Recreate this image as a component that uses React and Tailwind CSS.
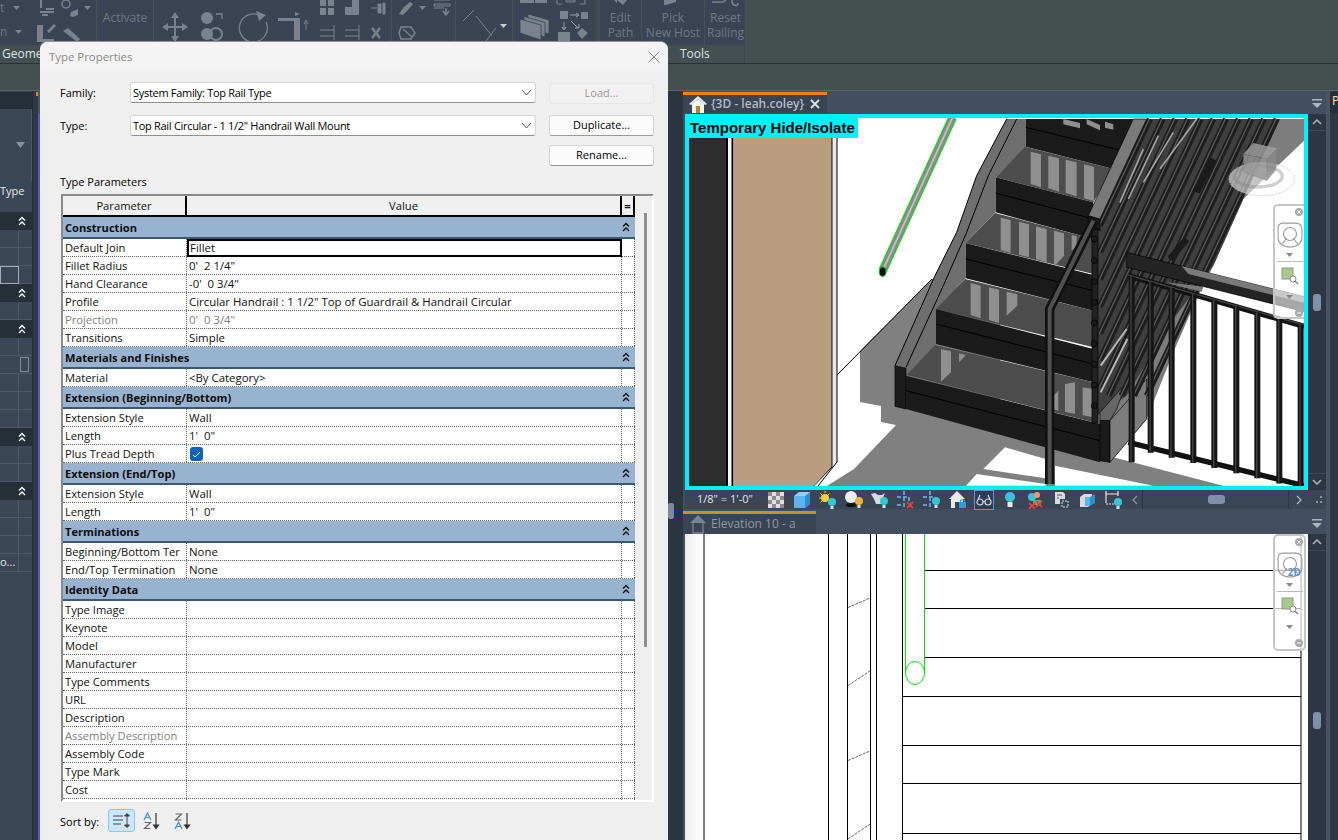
import React from "react";

const F = "font-['Open_Sans',sans-serif]";

const sections = [
  { title: "Construction", rows: [["Default Join", "Fillet", "sel"], ["Fillet Radius", "0'  2 1/4\""], ["Hand Clearance", "-0'  0 3/4\""], ["Profile", "Circular Handrail : 1 1/2\" Top of Guardrail & Handrail Circular"], ["Projection", "0'  0 3/4\"", "dim"], ["Transitions", "Simple"]] },
  { title: "Materials and Finishes", rows: [["Material", "<By Category>"]] },
  { title: "Extension (Beginning/Bottom)", rows: [["Extension Style", "Wall"], ["Length", "1'  0\""], ["Plus Tread Depth", "", "check"]] },
  { title: "Extension (End/Top)", rows: [["Extension Style", "Wall"], ["Length", "1'  0\""]] },
  { title: "Terminations", rows: [["Beginning/Bottom Ter", "None"], ["End/Top Termination", "None"]] },
  { title: "Identity Data", rows: [["Type Image", ""], ["Keynote", ""], ["Model", ""], ["Manufacturer", ""], ["Type Comments", ""], ["URL", ""], ["Description", ""], ["Assembly Description", "", "dimname"], ["Assembly Code", ""], ["Type Mark", ""], ["Cost", ""], ["", ""]] },
];

function DoubleUp({ color = "#111" }) {
  return (
    <svg width="8" height="10" viewBox="0 0 8 10" fill="none" stroke={color} strokeWidth="1.4">
      <path d="M1 4.5 4 1.5 7 4.5M1 9 4 6 7 9" />
    </svg>
  );
}

function Chevron() {
  return (
    <svg width="11" height="7" viewBox="0 0 11 7" fill="none" stroke="#555" strokeWidth="1">
      <path d="M1 1 5.5 6 10 1" />
    </svg>
  );
}

function Select({ text }) {
  return (
    <div className="w-[406px] h-[21px] bg-white border border-[#d4d4d4] border-b-[#8f8f8f] rounded-[3px] flex items-center justify-between pl-[2px] pr-[3px] text-[11px] tracking-[-0.3px] text-black">
      <span className="pt-[1px]">{text}</span>
      <Chevron />
    </div>
  );
}

function Btn({ children, dim }) {
  return (
    <div className={dim
      ? "w-[105px] h-[21px] bg-[#f1f1f1] border border-[#e6e6e6] rounded-[3px] flex items-center justify-center text-[11px] text-[#9a9a9a]"
      : "w-[105px] h-[21px] bg-[#fbfbfb] border border-[#d4d4d4] border-b-[#9a9a9a] rounded-[3px] flex items-center justify-center text-[11px] text-black"}>
      {children}
    </div>
  );
}

function Row({ row }) {
  const [name, value, kind] = row;
  return (
    <div className="flex h-[18px] bg-white text-[#111] border-b border-dotted border-[#666]">
      <div className={kind === "dim" || kind === "dimname"
        ? "w-[124px] shrink-0 pl-[2px] overflow-hidden whitespace-nowrap border-r border-dotted border-[#666] text-[#808080] text-[11.2px] leading-[17px]"
        : "w-[124px] shrink-0 pl-[2px] overflow-hidden whitespace-nowrap border-r border-dotted border-[#666] text-[11.2px] leading-[17px]"}>
        {name}
      </div>
      {kind === "sel" ? (
        <div className="w-[435px] shrink-0 h-[18px] border-2 border-black pl-[1px] text-[11.4px] leading-[14px] bg-white">{value}</div>
      ) : (
        <div className={kind === "dim"
          ? "w-[435px] shrink-0 pl-[2px] whitespace-pre border-r border-dotted border-[#666] text-[#808080] text-[11.4px] leading-[17px]"
          : "w-[435px] shrink-0 pl-[2px] whitespace-pre border-r border-dotted border-[#666] text-[11.4px] leading-[17px]"}>
          {kind === "check" ? (
            <div className="w-[13px] h-[14px] mt-[2px] ml-[1px] rounded-[3px] bg-[#0a62bd] flex items-center justify-center">
              <svg width="9" height="7" viewBox="0 0 9 7" fill="none" stroke="#fff" strokeWidth="1"><path d="M1 4 3.2 6 8 1" /></svg>
            </div>
          ) : value}
        </div>
      )}
      <div className="w-[13px] shrink-0 border-r border-dotted border-[#666]" />
    </div>
  );
}

function Table() {
  return (
    <div className="ml-[1px] w-[593px] h-[608px] border-t-2 border-l-2 border-t-[#8a8a8a] border-l-[#8a8a8a] border-r-2 border-b-2 border-r-white border-b-white flex overflow-hidden">
      <div className="w-[572px] shrink-0">
        <div className="flex h-[21px] bg-[#f0f0f0] border-b-2 border-black text-[11.2px] text-[#111] leading-[19px] text-center">
          <div className="w-[124px] border-r-2 border-black">Parameter</div>
          <div className="w-[435px] border-r-2 border-black">Value</div>
          <div className="w-[13px] border-r-2 border-black font-bold">=</div>
        </div>
        {sections.map((s) => (
          <div key={s.title}>
            <div className="flex items-center justify-between h-[22px] bg-[#98b3d0] border-b-2 border-[#3d5673] pl-[2px] pr-[5px] text-[11.1px] font-bold text-[#0c0c0c]">
              <span className="pt-[3px]">{s.title}</span>
              <DoubleUp />
            </div>
            {s.rows.map((r, i) => <Row key={i} row={r} />)}
          </div>
        ))}
      </div>
      <div className="flex-1 bg-[#f0f0f0] relative">
        <div className="ml-[9px] mt-[17px] w-[3px] h-[434px] bg-[#8f8f8f]" />
      </div>
    </div>
  );
}

function SortIcon({ children, active }) {
  return (
    <div className={active
      ? "w-[27px] h-[23px] rounded-[3px] bg-[#cce6fb] border border-[#8cc6f2] flex items-center justify-center"
      : "w-[27px] h-[23px] flex items-center justify-center"}>
      {children}
    </div>
  );
}

function Dialog() {
  return (
    <div className={`absolute left-[40px] top-[41px] w-[628px] h-[799px] bg-[#efefef] rounded-t-[8px] border-t border-[#8e9297] ${F}`}>
      <div className="h-[29px] bg-[#f3f3f3] rounded-t-[8px] flex items-center justify-between pl-[9px] pr-[8px]">
        <span className="text-[11.4px] text-[#8a8a8a]">Type Properties</span>
        <svg width="12" height="12" viewBox="0 0 12 12" stroke="#8a8a8a" strokeWidth="1"><path d="M.5.5 11.500 11.500M11.500.5.5 11.500" /></svg>
      </div>
      <div className="pl-[20px] pt-[11px]">
        <div className="flex items-center h-[21px]">
          <span className="w-[70px] pt-[1px] text-[11px] text-black">Family:</span>
          <Select text="System Family: Top Rail Type" />
          <div className="ml-[13px] mt-[1px]"><Btn dim>Load...</Btn></div>
        </div>
        <div className="flex items-center h-[21px] mt-[12px]">
          <span className="w-[70px] pt-[1px] text-[11px] text-black">Type:</span>
          <Select text={'Top Rail Circular - 1 1/2" Handrail Wall Mount'} />
          <div className="ml-[13px] -mt-[1px]"><Btn>Duplicate...</Btn></div>
        </div>
        <div className="flex justify-end h-[21px] mt-[9px] pr-[14px]"><Btn>Rename...</Btn></div>
        <div className="h-[21px] mt-[6px] text-[11px] text-black leading-[20px]">Type Parameters</div>
        <div className="mt-[1px]"><Table /></div>
        <div className="flex items-center mt-[7px] h-[23px]">
          <span className="w-[48px] mt-[3px] text-[11px] text-black">Sort by:</span>
          <SortIcon active>
            <svg width="20" height="17" viewBox="0 0 20 17" fill="none" stroke="#444" strokeWidth="1">
              <path d="M1 4h10M1 8h10M1 12h8M15 2v13" />
              <path d="M12.500 4 15 1.500 17.500 4ZM12.500 13 15 15.500 17.500 13Z" fill="#444" />
            </svg>
          </SortIcon>
          <div className="w-[3px]" />
          <SortIcon>
            <svg width="18" height="18" viewBox="0 0 18 18" fill="none" strokeWidth="1.200">
              <path d="M1 8 4.500 1 8 8M2.300 5.500h4.400" stroke="#3b8ee6" />
              <path d="M1.500 10.500h6L1.500 16.500h6" stroke="#666" />
              <path d="M13 1v14" stroke="#333" />
              <path d="M10.500 13 13 16.500 15.500 13Z" fill="#333" stroke="#333" />
            </svg>
          </SortIcon>
          <div className="w-[4px]" />
          <SortIcon>
            <svg width="18" height="18" viewBox="0 0 18 18" fill="none" strokeWidth="1.200">
              <path d="M1.500 2h6L1.500 8h6" stroke="#666" />
              <path d="M1 17 4.500 10 8 17M2.300 14.500h4.400" stroke="#3b8ee6" />
              <path d="M13 1v14" stroke="#333" />
              <path d="M10.500 13 13 16.500 15.500 13Z" fill="#333" stroke="#333" />
            </svg>
          </SortIcon>
        </div>
      </div>
    </div>
  );
}

function RibbonPanel({ className, children }) {
  return <div className={`shrink-0 h-[45px] border-r border-[#4a5258] relative overflow-hidden ${className}`}>{children}</div>;
}

function Ribbon() {
  const ic = "#7b828d";
  return (
    <div className={`h-[64px] flex bg-[#445050] border-b border-[#2a3238] ${F}`}>
      <div className="w-[745px] shrink-0 bg-[#434f50] border-r border-[#3c4850]">
        <div className="flex h-[45px] bg-[#3b4454] text-[12px] text-[#6f7886] leading-[15px] text-center">
          <RibbonPanel className="w-[97px]">
            <svg width="97" height="45" viewBox="0 0 97 45" fill={ic}>
              <path d="M13 6h7l-3.500 4ZM15 30h7l-3.500 4ZM84 6h7l-3.500 4Z" />
              <rect x="40" y="0" width="2" height="8" /><rect x="46" y="8" width="8" height="2" /><rect x="40" y="11" width="14" height="2" /><rect x="42" y="14" width="6" height="2" />
              <circle cx="66" cy="4" r="4" fill="none" stroke={ic} strokeWidth="1.500" /><path d="M71 12l7-3 0 6-5 2-3-1Z" />
              <path d="M37 25h6v14h11v3H37ZM47 31l7-7 2 2-7 7Z" />
              <path d="M63 31l5-3 12 11-3 3-10-8Z" />
            </svg>
            <span className="absolute left-0 top-[0px] text-[12px]">t</span>
            <span className="absolute left-0 top-[24px] text-[12px]">n</span>
          </RibbonPanel>
          <RibbonPanel className="w-[57px]"><div className="pt-[10px]">Activate</div></RibbonPanel>
          <RibbonPanel className="w-[238px]">
            <svg width="238" height="45" viewBox="154 0 238 45" fill={ic}>
              <path d="M175 12l4 6h-8ZM175 42l4-6h-8ZM162 27l6-4v8ZM188 27l-6-4v8Z" /><path d="M174 17h2v20h-2ZM165 26h20v2h-20Z" />
              <circle cx="207" cy="18" r="6" /><circle cx="207" cy="34" r="6" /><circle cx="216" cy="34" r="6" fill="none" stroke={ic} strokeWidth="2" />
              <path d="M216 14h6v5" fill="none" stroke={ic} strokeWidth="1.300" />
              <path d="M262 17a14 14 0 1 0 4 5" fill="none" stroke={ic} strokeWidth="1.300" /><path d="M256 11l10 4-7 6Z" />
              <path d="M278 18h16v3h-16ZM294 18h6v22h-6ZM283 14h16M295 12l5 2-5 2" /><path d="M306 30v-8M304 24l2-4 2 4" fill="none" stroke={ic} />
              <rect x="320" y="0" width="6" height="6" /><rect x="328" y="0" width="6" height="6" /><rect x="320" y="8" width="6" height="7" /><rect x="328" y="8" width="6" height="7" />
              <rect x="345" y="0" width="14" height="15" /><rect x="345" y="0" width="7" height="7" fill="#3b4454" />
              <path d="M371 8h6M378 4h3v9h-3ZM383 3h2v11h-2Z" stroke={ic} />
              <path d="M320 30h14M320 36h14M334 25v15" stroke={ic} fill="none" /><path d="M345 30h14M345 36h14M359 25v15" stroke={ic} fill="none" />
              <path d="M372 28l8 10M380 28l-8 10" stroke={ic} strokeWidth="2.500" />
            </svg>
          </RibbonPanel>
          <RibbonPanel className="w-[64px]">
            <svg width="64" height="45" viewBox="392 0 64 45" fill={ic}>
              <path d="M399 14l5-7 6-5 3 2-5 6-5 5Z" /><path d="M419 6h7l-3.500 4Z" />
              <path d="M434 0h16M434 4h16v2h-16ZM434 8h10" stroke={ic} fill="none" /><path d="M446 8v6M443 11l3 4 3-4" fill="none" stroke={ic} strokeWidth="1.500" />
              <path d="M401 27l10 0 4 6-4 6-10 0-2-6Z M403 29l9 8" fill="none" stroke={ic} strokeWidth="1.500" />
            </svg>
          </RibbonPanel>
          <RibbonPanel className="w-[57px]">
            <svg width="57" height="45" viewBox="456 0 57 45" fill="none" stroke={ic}>
              <path d="M463 21l11-11M476 16l16 20" />
              <path d="M486 41l10-13" />
              <path d="M500 24h7l-3.500 4Z" fill="#c8ccd0" stroke="none" />
            </svg>
          </RibbonPanel>
          <RibbonPanel className="w-[83px] border-r-0">
            <svg width="83" height="45" viewBox="513 0 83 45" fill={ic} stroke="#3b4454" strokeWidth=".8">
              <path d="M528 14 549 20V34L528 27Z" />
              <path d="M524 16.500 545 22.500V37L524 30Z" />
              <path d="M520 19 541 25V40L520 33Z" />
              <rect x="520" y="0" width="14" height="3" stroke="none" /><rect x="535" y="0" width="12" height="3" stroke="none" />
              <path d="M557 0v4h5M585 0v4h-5M566 0h9v2h-9Z" fill="none" stroke={ic} strokeWidth="1" />
              <rect x="560" y="11" width="8" height="8" stroke="none" /><rect x="581" y="12" width="7" height="7" stroke="none" />
              <path d="M570 15h8M576 13l3 2-3 2M564 22v7M562 27l2 3 2-3M571 21l7 7M575 28h4v-4" stroke="#9aa0a8" strokeWidth="1" fill="none" />
              <rect x="558" y="32" width="12" height="13" stroke="none" /><path d="M582 28l6 5-6 6-5-6Z" stroke="none" />
            </svg>
          </RibbonPanel>
          <div className="w-[4px] shrink-0 bg-[#424e4e]" />
          <RibbonPanel className="w-[42px]">
            <svg className="absolute left-[14px] top-0" width="14" height="6" viewBox="0 0 14 6" fill={ic}><path d="M3 0l6 5 4-5ZM0 0h3v3Z" /></svg>
            <div className="pt-[10px]">Edit<br />Path</div>
          </RibbonPanel>
          <RibbonPanel className="w-[63px]">
            <svg className="absolute left-[22px] top-0" width="12" height="5" viewBox="0 0 12 5" fill={ic}><path d="M0 0h12v2l-10 3H0Z" /></svg>
            <div className="pt-[10px]">Pick<br />New Host</div>
          </RibbonPanel>
          <div className="shrink-0 w-[41px] h-[45px] relative">
            <svg className="absolute left-[7px] top-0" width="28" height="8" viewBox="0 0 28 8" fill="none" stroke={ic} strokeWidth="1.500"><path d="M0 2h11l3-2M20 0v2c1 4 6 5 6 1" /></svg>
            <div className="pt-[10px]">Reset<br />Railing</div>
          </div>
        </div>
        <div className="flex h-[18px] text-[12px] text-[#dfe3e6] leading-[18px]">
          <span className="pl-[2px] w-[678px]">Geome</span>
          <span className="pl-[2px]">Tools</span>
        </div>
      </div>
    </div>
  );
}

function LeftRow({ section, children }) {
  return section ? (
    <div className="h-[18px] bg-[#262e38] flex justify-end items-center pr-[6px]"><DoubleUp color="#fff" /></div>
  ) : (
    <div className="h-[18px] flex border-b border-[#4d5868]">
      <div className="w-[19px] border-r border-[#4d5868] text-[11px] text-[#e4e7ea] leading-[15px] whitespace-nowrap">{children}</div>
      <div className="flex-1" />
    </div>
  );
}

function LeftPanel() {
  const pat = ["s", "r", "r", "box", "s", "r", "s", "r", "chk", "r", "r", "r", "s", "r", "r", "s", "r", "r", "r", "o"];
  return (
    <div className={`w-[33px] shrink-0 bg-[#3b4757] border-r border-[#262e38] ${F}`}>
      <div className="h-[17px] bg-[#262e38] mt-[1px]" />
      <div className="h-[72px] border-r border-[#4d5868] flex justify-end items-center pr-[6px]">
        <svg width="9" height="6" viewBox="0 0 9 6" fill="#8793a3"><path d="M0 0h9L4.500 6Z" /></svg>
      </div>
      <div className="h-[22px] text-[11px] text-[#e4e7ea] leading-[20px]">Type</div>
      <div className="h-[9px]" />
      {pat.map((p, i) => {
        if (p === "s") return <LeftRow key={i} section />;
        if (p === "box") return (
          <div key={i} className="h-[18px] flex border-b border-[#4d5868]">
            <div className="w-[19px] h-[18px] border border-[#a4acb6]" />
          </div>
        );
        if (p === "chk") return (
          <div key={i} className="h-[18px] flex justify-end border-b border-[#4d5868] pr-[3px]">
            <div className="w-[9px] h-[15px] mt-[1px] border border-[#7e8a99]" />
          </div>
        );
        return <LeftRow key={i}>{p === "o" ? "o..." : null}</LeftRow>;
      })}
    </div>
  );
}

function HouseIcon({ dim }) {
  return dim ? (
    <svg width="20" height="19" viewBox="0 0 20 19" fill="none">
      <path d="M10 0 18 8H2Z" fill="#7b8490" />
      <path d="M5 8v10h10V8" stroke="#7b8490" strokeWidth="1.300" />
    </svg>
  ) : (
    <svg width="18" height="17" viewBox="0 0 18 17">
      <path d="M9 0 18 8 16 9 9 3 2 9 0 8Z" fill="#e8e8e8" />
      <path d="M3 8 9 3l6 5v9H3Z" fill="#f4f4f4" />
      <rect x="7" y="10" width="4" height="7" fill="#c97a2a" />
    </svg>
  );
}

function MenuIcon() {
  return (
    <svg width="10" height="9" viewBox="0 0 10 9" fill="#aeb6c2"><rect width="10" height="1.500" /><path d="M0 4h10L5 9Z" /></svg>
  );
}

function Bulb({ x = 0, y = 0, c = "#37c6d6" }) {
  return (
    <g transform={`translate(${x} ${y})`}>
      <circle cx="4" cy="4" r="4" fill={c} />
      <rect x="2.500" y="8" width="3" height="3" fill="#ddd" />
    </g>
  );
}

function RedX({ x, y }) {
  return <path transform={`translate(${x} ${y})`} d="M0 0 6 6M6 0 0 6" stroke="#e8403a" strokeWidth="1.800" />;
}

function StatusIcons() {
  const box = "w-[26px] h-[20px] flex items-center justify-center shrink-0";
  return (
    <>
      <div className={box}>
        <svg width="16" height="16" viewBox="0 0 16 16">
          <rect width="16" height="16" fill="#e0e0e0" />
          <path d="M0 0h4v4H0ZM8 0h4v4H8ZM4 4h4v4H4ZM12 4h4v4h-4ZM0 8h4v4H0ZM8 8h4v4H8ZM4 12h4v4H4ZM12 12h4v4h-4Z" fill="#8a8a8a" />
        </svg>
      </div>
      <div className={box}>
        <svg width="16" height="18" viewBox="0 0 16 18">
          <path d="M0 5 5 1h11v12l-5 4H0Z" fill="#8fd0f5" /><path d="M0 5h11v12H0Z" fill="#5bb5ec" /><path d="M11 5l5-4v12l-5 4Z" fill="#2e8fd0" />
        </svg>
      </div>
      <div className={box}>
        <svg width="18" height="18" viewBox="0 0 18 18">
          <circle cx="6" cy="7" r="4" fill="#f5d03a" />
          <path d="M6 0v2M0 7h2M1.500 2.500 3 4M10.500 2.500 9 4M1.500 11.500 3 10" stroke="#f5d03a" />
          <Bulb x={9} y={7} />
        </svg>
      </div>
      <div className={box}>
        <svg width="18" height="20" viewBox="0 0 18 20">
          <circle cx="6" cy="7" r="6" fill="#eceff2" /><ellipse cx="6" cy="15" rx="5" ry="2" fill="#111" />
          <Bulb x={10} y={7} c="#f0b040" />
        </svg>
      </div>
      <div className={box}>
        <svg width="18" height="18" viewBox="0 0 18 18">
          <path d="M0 3 4 2 7 4h4l3-2-2 5-1 6H5L3 8Z" fill="#d6dade" />
          <Bulb x={9} y={6} />
        </svg>
      </div>
      <div className={box}>
        <svg width="18" height="18" viewBox="0 0 18 18" fill="none">
          <path d="M7 0v16M0 6h12M12 6v5M0 14h5" stroke="#6db5ea" strokeWidth="1.500" strokeDasharray="4 2" />
          <RedX x={10} y={11} />
        </svg>
      </div>
      <div className={box}>
        <svg width="18" height="18" viewBox="0 0 18 18" fill="none">
          <path d="M7 0v16M0 6h12M0 14h5" stroke="#6db5ea" strokeWidth="1.500" strokeDasharray="4 2" />
          <Bulb x={9} y={6} />
        </svg>
      </div>
      <div className={box}>
        <svg width="18" height="18" viewBox="0 0 18 18">
          <path d="M8 0 16 8H14V17H2V8H0Z" fill="#e8eaec" /><rect x="6" y="11" width="4" height="6" fill="#3b4555" />
          <rect x="10" y="11" width="7" height="6" fill="#2c9fd0" /><path d="M11.500 11V9h4v2" fill="none" stroke="#2c9fd0" />
        </svg>
      </div>
      <div className={box}>
        <div className="w-[20px] h-[20px] border border-[#5b9bd5] bg-[#2c3e55] flex items-center justify-center">
          <svg width="16" height="12" viewBox="0 0 16 12" fill="none" stroke="#d5dae0" strokeWidth="1.200">
            <circle cx="4" cy="8" r="3" /><circle cx="12" cy="8" r="3" /><path d="M7 7.500h2M2 6l2-5M14 6l-2-5" />
          </svg>
        </div>
      </div>
      <div className={box}>
        <svg width="12" height="18" viewBox="0 0 12 18"><circle cx="6" cy="6" r="5" fill="#37c6d6" /><rect x="3.500" y="11" width="5" height="5" fill="#e8e8e8" /></svg>
      </div>
      <div className={box}>
        <svg width="18" height="18" viewBox="0 0 18 18" fill="none">
          <circle cx="5" cy="6" r="4" fill="#37c6d6" /><circle cx="10" cy="4" r="3" fill="#e8a060" /><path d="M6 14v-5h8v5Z" fill="#5db070" />
          <RedX x={9} y={10} /><RedX x={2} y={12} />
        </svg>
      </div>
      <div className={box}>
        <svg width="16" height="18" viewBox="0 0 16 18" fill="none">
          <path d="M1 1h8l2 2v5H6v5H1Z" fill="#d8dbdf" />
          <path d="M3 4h5M3 7h2" stroke="#555" /><path d="M8 10h6v6H8Z" stroke="#d8dbdf" strokeDasharray="2 1" />
        </svg>
      </div>
      <div className={box}>
        <svg width="16" height="16" viewBox="0 0 16 16">
          <path d="M0 5 4 2h8v10l-4 3H0Z" fill="#d8dbdf" /><path d="M5 5h5v9H5Z" fill="#5bb5ec" /><path d="M10 5l5-3v9l-5 3Z" fill="#2e8fd0" />
        </svg>
      </div>
      <div className={box}>
        <svg width="18" height="20" viewBox="0 0 18 20" fill="none">
          <path d="M1 1v12M13 1v5M1 4h12" stroke="#e3e6ea" strokeWidth="1.200" /><path d="M1 14h8" stroke="#e3e6ea" strokeDasharray="2 1" />
          <Bulb x={9} y={8} />
        </svg>
      </div>
    </>
  );
}

function Scene() {
  const balusters = [755, 812, 875, 940, 1003, 1069, 1132, 1198, 1262];
  const bars = [0, 1, 2, 3, 4, 5, 6, 7, 8, 9, 10];
  const dots = [360, 425, 488, 550, 612, 674, 736, 798, 860];
  return (
    <svg className="block w-full h-full" viewBox="689 119 615 368" preserveAspectRatio="none">
      <rect x="689" y="119" width="615" height="368" fill="#fff" />
      <rect x="689" y="119" width="37" height="368" fill="#2d2d2d" />
      <rect x="726" y="119" width="2" height="368" fill="#000" />
      <rect x="728" y="119" width="3.500" height="368" fill="#f4f4f4" />
      <rect x="731.500" y="119" width="2" height="368" fill="#000" />
      <path d="M733.500 119H832V468L814 487H733.500Z" fill="#b89d80" />
      <path d="M832 119V468L814 487" fill="none" stroke="#000" strokeWidth="1" />
      <path d="M833 119h4V463L816 487h-2L833 468Z" fill="#e8e8e8" />
      <path d="M837 119V463L818 487" fill="none" stroke="#000" strokeWidth="1" />

      <path d="M860 352 932 280 1000 300 1000 430 1120 460 1224 487H827L854 470 896 426 881 423 881 407 860 403Z" fill="#808080" />
      <path d="M837 376 932 280" fill="none" stroke="#000" strokeWidth="1" />

      <g transform="translate(880 120) scale(.33333)">
        <path d="M375 985 497 1020 497 1078 310 1050ZM290 1065 497 1095 497 1100 258 1100ZM525 1040 820 1100 525 1100Z" fill="#fff" />
        {/* underside and wall */}
        <path d="M1040 0H1272V65L1090 240 1000 440 950 540 880 700 800 900 690 1030 636 1025 636 300 800 0Z" fill="#7d7d7d" />
        <path d="M800 0H1200L1090 240 1000 440 880 600 740 830 636 900 636 300Z" fill="#3f3f3f" />
        {/* outer stringer */}
        <path d="M380 0 290 170 230 340 165 470 45 740 78 748 80 770 168 675 168 570 257 478 257 372 347 280 347 175 437 83 437 0Z" fill="#6f6f6f" />
        <path d="M380 0 290 170 230 340 165 470 45 740M410 0 325 170 260 340 190 500 78 745" fill="none" stroke="#000" strokeWidth="3" />
        {/* steps */}
        <path d="M80 768 165 678 640 790 640 910Z" fill="#4d4d4d" />
        <path d="M168 570 255 480 640 575 640 685Z" fill="#4d4d4d" />
        <path d="M257 372 345 282 640 360 640 465Z" fill="#4d4d4d" />
        <path d="M347 175 435 83 700 150 640 250Z" fill="#4d4d4d" />
        <g fill="#8f8f8f">
          <path d="M452 98 483 106V205L452 195ZM505 110 537 118V218L505 208ZM557 122 590 130V232L557 222ZM612 136 642 144V246L612 238Z" />
          <path d="M362 296 392 303V402L362 393ZM417 308 447 316V415L417 407ZM468 322 500 330V430L468 420ZM522 335 552 343 552 410 525 440 522 433ZM575 348 590 352V380L575 395Z" />
          <path d="M272 492 302 500V598L272 588ZM327 505 357 512V612L327 603ZM380 518 412 526V560L380 590Z" />
          <path d="M183 690 213 697V760L183 788ZM237 703 258 708 237 730ZM555 795 585 790V885L555 878ZM608 805 638 810V895L608 888ZM520 830 535 815V875L520 870Z" />
        </g>
        <path d="M45 740 78 748V870L45 862Z" fill="#1c1c1c" stroke="#000" strokeWidth="2" />
        <path d="M78 770 660 915V1030L78 870Z" fill="#1b1b1b" />
        <path d="M78 815 660 965" stroke="#000" strokeWidth="3" fill="none" />
        <path d="M168 570 640 690V790L168 675Z" fill="#1b1b1b" />
        <path d="M168 615 640 735" stroke="#000" strokeWidth="3" fill="none" />
        <path d="M257 372 640 468V575L257 478Z" fill="#1b1b1b" />
        <path d="M257 420 640 515" stroke="#000" strokeWidth="3" fill="none" />
        <path d="M347 175 640 250V360L347 280Z" fill="#1b1b1b" />
        <path d="M347 222 640 300" stroke="#000" strokeWidth="3" fill="none" />
        <path d="M437 0H760L700 150 437 83Z" fill="#1b1b1b" />
        <path d="M437 25 715 92" stroke="#000" strokeWidth="3" fill="none" />
        <path d="M550 0 600 12V28L550 16ZM620 0 660 18V34L620 16ZM675 8 700 16V32L675 26Z" fill="#8f8f8f" />
        <path d="M660 880 740 790 710 870 690 905H660Z" fill="#666" stroke="#000" strokeWidth="2" />
        <path d="M660 905 690 905V1030L660 1025Z" fill="#1b1b1b" stroke="#000" strokeWidth="2" />
        <path d="M690 905 800 780 800 900 690 1030Z" fill="#7d7d7d" stroke="#000" strokeWidth="2" />
        {/* diagonal rails */}
        {bars.map((k) => {
          const tx = 810 + k * 38;
          const by = Math.min((tx - 660) * 2.13, 830);
          const bx = tx - by / 2.13;
          return (
            <g key={k}>
              <path d={`M${tx} 0 ${bx} ${by}`} stroke="#1e1e1e" strokeWidth="18" fill="none" />
              <path d={`M${tx - 2} 0 ${bx - 2} ${by}`} stroke="#5a5a5a" strokeWidth="4" fill="none" />
            </g>
          );
        })}
        <path d="M790 90 720 250M835 50 745 240M880 40 790 190M950 0 840 150" stroke="#b0b0b0" strokeWidth="5" fill="none" opacity=".9" />
        <path d="M740 630 662 740M742 660 662 820" stroke="#b8b8b8" strokeWidth="6" fill="none" />
        <path d="M1000 120 950 220M920 360 870 420" stroke="#1b1b1b" strokeWidth="20" fill="none" />
        {/* guard cap */}
        <path d="M625 290 760 0H800L660 300Z" fill="#7a7a7a" stroke="#000" strokeWidth="2" />
        <path d="M625 292 660 302V335L625 325Z" fill="#1b1b1b" stroke="#000" strokeWidth="2" />
        <path d="M636 330H654V912H636Z" fill="#222" stroke="#000" strokeWidth="2" />
        {dots.map((y) => <circle key={y} cx="643" cy={y} r="9" fill="#1a1a1a" stroke="#000" strokeWidth="2" />)}
        {/* handrail */}
        <path d="M509 1095V570L640 305" fill="none" stroke="#111" strokeWidth="28" strokeLinejoin="round" />
        <path d="M509 1095V570L640 305" fill="none" stroke="#505050" strokeWidth="12" strokeLinejoin="round" />
        {/* right railing */}
        <path d="M740 400 1272 533V578L740 445Z" fill="#242424" stroke="#000" strokeWidth="2" />
        <path d="M905 441 1272 533V551L925 465Z" fill="#7a7a7a" />
        <path d="M860 490 970 503 965 518 880 497Z" fill="#7a7a7a" />
        <path d="M745 470 1272 622" stroke="#111" strokeWidth="16" fill="none" />
        <path d="M745 468 1272 618" stroke="#444" strokeWidth="4" fill="none" />
        <path d="M745 970 1272 1100" stroke="#111" strokeWidth="16" fill="none" />
        {balusters.map((x) => (
          <g key={x}>
            <path d={`M${x} ${470 + (x - 745) * 0.285}V${x === 755 ? 1030 : 985 + (x - 745) * 0.24}`} stroke="#151515" strokeWidth="18" fill="none" />
            <path d={`M${x - 2} ${470 + (x - 745) * 0.285}V${x === 755 ? 1030 : 985 + (x - 745) * 0.24}`} stroke="#444" strokeWidth="4" fill="none" />
          </g>
        ))}
        {/* green pipe */}
        <path d="M218 -5 8 455" stroke="#00e000" strokeWidth="26" fill="none" />
        <path d="M218 -5 8 455" stroke="#8c8c8c" strokeWidth="20" fill="none" />
        <path d="M218 -5 8 455" stroke="#c4c4c4" strokeWidth="5" fill="none" />
        <ellipse cx="8" cy="458" rx="10" ry="14" fill="#0a0a0a" stroke="#00c800" strokeWidth="3" />
        {/* view cube */}
        <ellipse cx="1145" cy="180" rx="98" ry="50" fill="#fff" fillOpacity=".55" stroke="#bbb" strokeWidth="2" strokeDasharray="6 3" />
        <ellipse cx="1135" cy="172" rx="72" ry="32" fill="none" stroke="#888" strokeWidth="10" opacity=".4" />
        <g opacity=".8">
          <path d="M1090 105 1120 72 1192 88 1160 120Z" fill="#a0a0a0" />
          <path d="M1090 105 1160 120 1160 185 1092 160Z" fill="#999" stroke="#777" />
          <path d="M1160 120 1192 88 1186 155 1160 185Z" fill="#8a8a8a" stroke="#777" />
        </g>
      </g>
    </svg>
  );
}

function NavDot({ minus }) {
  return (
    <svg className="self-end mr-[1px]" width="8" height="8" viewBox="0 0 8 8">
      <circle cx="4" cy="4" r="4" fill="#a8a8a8" />
      <path d={minus ? "M2 4h4" : "M2.300 2.300 5.700 5.700M5.700 2.300 2.300 5.700"} stroke="#fff" strokeWidth="1" />
    </svg>
  );
}

function NavBar({ h, two }) {
  return (
    <div className={h
      ? "absolute right-[2px] top-[0px] w-[33px] h-[117px] bg-white/70 border-2 border-[#c6c6c6] rounded-[5px] flex flex-col items-center pt-[2px]"
      : "absolute right-0 top-[86px] w-[31px] h-[115px] bg-white/60 border-2 border-r-0 border-[#c6c6c6] rounded-l-[5px] flex flex-col items-center pt-[2px]"}>
      <NavDot />
      <svg className="mt-[6px]" width="26" height="26" viewBox="0 0 24 24" fill="none" stroke="#9a9a9a" strokeWidth="1">
        <path d="M5 1h12c4 0 6 2 6 6v8c0 4-4 8-11 8S1 19 1 15V5c0-2 2-4 4-4Z" />
        <circle cx="12" cy="11" r="6" />
        <path d="M5 20l4-5M19 20l-4-5" />
        {two ? <text x="10" y="22" fontSize="9" fontWeight="700" fill="#5f8fc5" stroke="none">2D</text> : null}
      </svg>
      <svg className="mt-[5px]" width="7" height="4" viewBox="0 0 7 4" fill="#888"><path d="M0 0h7L3.500 4Z" /></svg>
      <div className="w-[26px] h-px bg-[#bbb] mt-[4px] shrink-0" />
      <svg className="mt-[5px]" width="18" height="18" viewBox="0 0 18 18" fill="none">
        <rect x="1" y="1" width="11" height="11" fill="#a8c98e" stroke="#8a9a80" />
        <circle cx="12" cy="12" r="3" fill="#fff" stroke="#888" /><path d="M14 14l3 3" stroke="#888" strokeWidth="1.500" />
      </svg>
      <svg className="mt-[10px]" width="7" height="4" viewBox="0 0 7 4" fill="#888"><path d="M0 0h7L3.500 4Z" /></svg>
      <div className="self-end mt-[10px]"><NavDot minus /></div>
    </div>
  );
}

function Views() {
  return (
    <div className={`w-[643px] shrink-0 h-full bg-[#434e60] flex flex-col ${F}`}>
      {/* 3D tab */}
      <div className="h-[23px] flex justify-between shrink-0">
        <div className="w-[144px] h-[21px] mt-[1px] bg-[#3b4454] border-t-[3px] border-[#e08a10] flex items-center pl-[6px]">
          <HouseIcon />
          <span className="ml-[4px] text-[12px] font-semibold text-[#b4bbc6] whitespace-nowrap">{"{3D - leah.coley}"}</span>
          <svg className="ml-[6px]" width="10" height="10" viewBox="0 0 10 10" stroke="#dfe3e8" strokeWidth="1.800"><path d="M1 1 9 9M9 1 1 9" /></svg>
        </div>
        <div className="pr-[4px] pt-[8px]"><MenuIcon /></div>
      </div>
      {/* 3D view */}
      <div className="flex pl-[2px] h-[376px] shrink-0">
        <div className="w-[623px] h-[376px] border-4 border-[#00f0ff] relative shrink-0">
          <Scene />
          <div className="absolute left-0 top-0 w-[169px] h-[20px] bg-[#00f0ff] text-[15px] leading-[19px] font-semibold text-black pl-[1px] font-['Liberation_Sans',sans-serif] whitespace-nowrap">Temporary Hide/Isolate</div>
          <NavBar />
        </div>
        <div className="w-[18px] bg-[#2d3743] flex flex-col">
          <div className="h-[17px] border-b border-[#3d4856] flex items-center justify-center">
            <svg width="10" height="6" viewBox="0 0 10 6" fill="none" stroke="#aeb6c2" strokeWidth="1.500"><path d="M1 5 5 1 9 5" /></svg>
          </div>
          <div className="flex-1 pt-[163px] pl-[5px]"><div className="w-[8px] h-[17px] rounded-[3px] bg-[#7f90a8]" /></div>
          <div className="h-[17px] border-t border-[#3d4856] flex items-center justify-center">
            <svg width="10" height="6" viewBox="0 0 10 6" fill="none" stroke="#aeb6c2" strokeWidth="1.500"><path d="M1 1 5 5 9 1" /></svg>
          </div>
        </div>
      </div>
      {/* status bar */}
      <div className="h-[19px] shrink-0 ml-[2px] bg-[#3a4555] flex items-center overflow-visible">
        <span className="w-[78px] pl-[12px] text-[11px] text-[#e3e6ea] shrink-0 whitespace-nowrap">{"1/8\" = 1'-0\""}</span>
        <StatusIcons />
        <div className="flex-1 flex items-center pl-[5px] pr-[4px]">
          <svg width="6" height="10" viewBox="0 0 6 10" fill="none" stroke="#8a94a2" strokeWidth="1.300"><path d="M5 1 1 5l4 4" /></svg>
          <div className="ml-[4px] h-[19px] w-px bg-[#2d3743]" />
          <div className="ml-[65px] w-[17px] h-[9px] rounded-[3px] bg-[#7f90a8]" />
          <div className="ml-[63px] h-[19px] w-px bg-[#2d3743]" />
          <svg className="ml-[7px]" width="6" height="10" viewBox="0 0 6 10" fill="none" stroke="#aeb6c2" strokeWidth="1.300"><path d="M1 1l4 4-4 4" /></svg>
          <svg className="ml-auto" width="7" height="7" viewBox="0 0 7 7" fill="#8a94a2"><path d="M5 0h2v2H5ZM1 5h2v2H1ZM5 5h2v2H5Z" /></svg>
        </div>
      </div>
      {/* Elevation tab */}
      <div className="h-[24px] shrink-0 mt-[1px] flex justify-between">
        <div className="w-[133px] h-[23px] mt-[1px] bg-[#3b4454] border-t-[3px] border-[#e08a10] flex items-center pl-[5px]">
          <HouseIcon dim />
          <span className="ml-[3px] text-[12px] text-[#8f98a5] whitespace-nowrap">Elevation 10 - a</span>
        </div>
        <div className="pr-[4px] pt-[9px]"><MenuIcon /></div>
      </div>
      {/* Elevation view */}
      <div className="flex pl-[2px] flex-1 min-h-0">
        <div className="w-[623px] h-full relative shrink-0 bg-gradient-to-r from-[#eeeeee] to-white to-[3%]">
          <svg className="block w-full h-full" viewBox="685 534 623 306" preserveAspectRatio="none" fill="none">
            <path d="M704 534V840M828.500 534V840M847.500 534V840M870.500 534V840M876.500 534V840M902.500 534V840M1301 534V840" stroke="#000" strokeWidth="1" />
            <path d="M903 570.500h2M925 570.500h376M903 608.500h2M925 608.500h376M925 657.500h376M903 696.500h398M903 745.500h398M903 783.500h398M903 833.500h398" stroke="#000" strokeWidth="1" />
            <rect x="903" y="534" width="22" height="140" fill="#fff" />
            <path d="M905.500 534V673M924.500 534V673" stroke="#00e000" strokeWidth="1" />
            <ellipse cx="915" cy="673" rx="9.500" ry="11.500" stroke="#00e000" strokeWidth="1" fill="#fff" />
            <path d="M848 607.500 870 598M848 685.500 870 671M848 760.500 870 751M848 839 870 824" stroke="#666" strokeWidth="1" strokeDasharray="3 1" />
          </svg>
          <NavBar h two />
        </div>
        <div className="w-[18px] bg-[#2d3743] flex flex-col">
          <div className="h-[17px] border-b border-[#3d4856] flex items-center justify-center">
            <svg width="10" height="6" viewBox="0 0 10 6" fill="none" stroke="#aeb6c2" strokeWidth="1.500"><path d="M1 5 5 1 9 5" /></svg>
          </div>
          <div className="flex-1 pt-[161px] pl-[5px]"><div className="w-[8px] h-[17px] rounded-[3px] bg-[#7f90a8]" /></div>
        </div>
      </div>
    </div>
  );
}

export default function App() {
  return (
    <div className="relative w-[1338px] h-[840px] overflow-hidden bg-[#2d3843] flex flex-col">
      <Ribbon />
      <div className="h-[27px] shrink-0 bg-[#445050] border-b border-[#5a6470]" />
      <div className="flex-1 min-h-0 flex bg-[#4a5464]">
        <LeftPanel />
        <div className="w-[5px] shrink-0 bg-[#2f3844] relative">
          <div className="absolute left-[3px] top-[1px] w-[2px] h-[4px] bg-[#e08a10]" />
        </div>
        <div className="w-[2px] shrink-0 mt-[22px] bg-[#5b57b0]" />
        <div className="w-[643px] shrink-0 bg-[#2b3540] relative">
          <div className="absolute right-[9px] top-[412px] w-[6px] h-[16px] rounded-[2px] bg-[#7f8a98]" />
        </div>
        <Views />
        <div className="w-[4px] shrink-0 bg-[#4a5464]" />
        <div className={`flex-1 bg-[#2f3945] ${F}`}>
          <div className="h-[21px] bg-[#262e38] mt-[1px] pl-[2px] text-[12px] text-[#e4e7ea]">P</div>
        </div>
      </div>
      <Dialog />
    </div>
  );
}
